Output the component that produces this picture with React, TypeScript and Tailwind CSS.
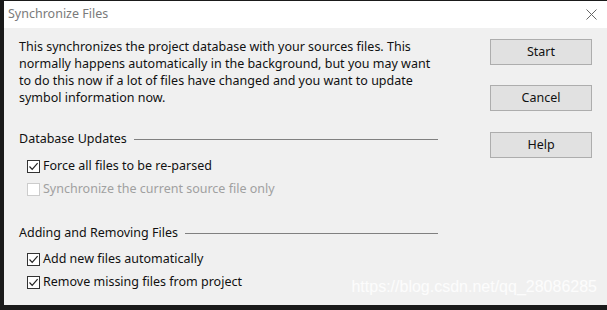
import React from "react";

const font = { fontFamily: '"Microsoft YaHei", "Noto Sans", "Noto Sans CJK SC", sans-serif' };

function Check({ checked, disabled, label }: { checked?: boolean; disabled?: boolean; label: string }) {
  return (
    <div className={`flex items-center h-[23px] pl-[8px] ${disabled ? "text-[#a0a0a0]" : "text-[#111]"}`}>
      <div
        className={`w-[13px] h-[13px] border flex items-center justify-center bg-white ${
          disabled ? "border-[#cccccc]" : "border-[#333333]"
        }`}
      >
        {checked && (
          <svg width="11" height="11" viewBox="0 0 11 11">
            <path d="M1.5 5.5 L4.2 8.3 L9.6 2.2" fill="none" stroke="#222" strokeWidth="1.2" />
          </svg>
        )}
      </div>
      <span className="ml-[3px] text-[12.5px]">{label}</span>
    </div>
  );
}

function Heading({ text }: { text: string }) {
  return (
    <div className="flex items-center h-[20px] text-[12.5px] text-[#111] pr-[169px]">
      <span>{text}</span>
      <div className="flex-1 h-px bg-[#808080] ml-[7px]" />
    </div>
  );
}

function Btn({ label, className }: { label: string; className?: string }) {
  return (
    <div
      className={`w-[102px] h-[26px] bg-[#e1e1e1] border border-[#adadad] flex items-center justify-center text-[12.5px] text-[#111] ${
        className ?? ""
      }`}
    >
      {label}
    </div>
  );
}

export default function App() {
  return (
    <div className="w-[607px] h-[310px] bg-[#1a1a1a] relative overflow-hidden" style={font}>
      <div className="absolute left-[4px] top-[1px] right-0 bottom-[5px] flex flex-col">
        <div className="h-[27px] bg-white flex items-center justify-between pl-[4px] pr-[10px]">
          <span className="text-[12.5px] text-[#7a7a7a]">Synchronize Files</span>
          <svg width="11" height="11" viewBox="0 0 11 11">
            <path d="M0.5 0.5 L10.5 10.5 M10.5 0.5 L0.5 10.5" stroke="#666" strokeWidth="1" />
          </svg>
        </div>
        <div className="flex-1 bg-[#f0f0f0] flex relative">
          <div className="flex-1 pl-[15px] pt-[10px]">
            <p className="text-[12.5px] leading-[17px] text-[#111] w-[414px]">
              This synchronizes the project database with your sources files. This normally happens automatically in the
              background, but you may want to do this now if a lot of files have changed and you want to update symbol
              information now.
            </p>
            <div className="mt-[23px]">
              <Heading text="Database Updates" />
              <div className="mt-[6px]">
                <Check checked label="Force all files to be re-parsed" />
                <Check disabled label="Synchronize the current source file only" />
              </div>
            </div>
            <div className="mt-[22px]">
              <Heading text="Adding and Removing Files" />
              <div className="mt-[5px]">
                <Check checked label="Add new files automatically" />
                <Check checked label="Remove missing files from project" />
              </div>
            </div>
          </div>
          <div className="absolute right-[15px] top-[11px] flex flex-col">
            <Btn label="Start" />
            <Btn label="Cancel" className="mt-[20px]" />
            <Btn label="Help" className="mt-[21px]" />
          </div>
          <span
            className="absolute right-[10px] bottom-[6px] text-[16px] text-white/80"
            style={{ fontFamily: '"Liberation Sans", Arial, sans-serif' }}
          >
            https://blog.csdn.net/qq_28086285
          </span>
        </div>
      </div>
    </div>
  );
}
